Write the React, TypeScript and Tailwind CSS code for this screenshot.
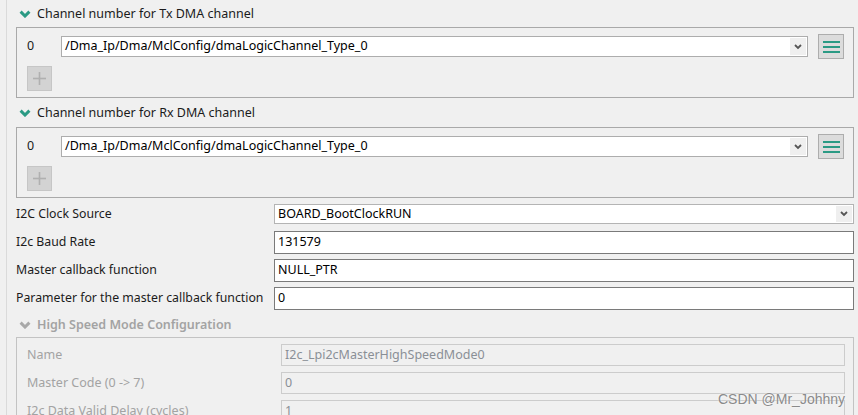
import React from "react";

const font = { fontFamily: '"Noto Sans", "Open Sans", sans-serif' };

function Chevron({ color }: { color: string }) {
  return (
    <svg width="12" height="8" viewBox="0 0 12 8" className="shrink-0">
      <polyline points="1.6,1.6 6,6 10.4,1.6" fill="none" stroke={color} strokeWidth="3" />
    </svg>
  );
}

function SmallArrow() {
  return (
    <svg width="8" height="6" viewBox="0 0 8 6">
      <polyline points="1,1 4,4 7,1" fill="none" stroke="#555" strokeWidth="1.8" />
    </svg>
  );
}

function SectionHeader({ title, disabled, h }: { title: string; disabled?: boolean; h: string }) {
  return (
    <div className={`flex items-center gap-[6px] pl-[3px] pt-[1px] ${h}`}>
      <Chevron color={disabled ? "#a9a9a9" : "#2a9a84"} />
      <span className={disabled ? "text-[12.5px] font-semibold text-[#a3a3a3]" : "text-[12.5px] text-[#1b1b1b]"}>{title}</span>
    </div>
  );
}

function ChannelBox({ value }: { value: string }) {
  return (
    <div className="h-[71px] border border-[#a9a9a9] pl-[10px] pr-[9px] pt-[6px]">
      <div className="flex items-center h-[25px]">
        <span className="w-[34px] text-[12.5px] text-[#1b1b1b]">0</span>
        <div className="flex-1 h-[21px] bg-white border border-[#adadad] flex items-center pl-[3px] pr-[1px]">
          <span className="flex-1 text-[12.5px] text-black leading-none">{value}</span>
          <div className="w-[16px] h-[17px] bg-[#efefef] flex items-center justify-center">
            <SmallArrow />
          </div>
        </div>
        <div className="ml-[10px] w-[26px] h-[25px] bg-[#dcdcdc] border border-[#adadad] flex flex-col items-center justify-center gap-[3px]">
          <div className="w-[17px] h-[2px] bg-[#2a9a84]" />
          <div className="w-[17px] h-[2px] bg-[#2a9a84]" />
          <div className="w-[17px] h-[2px] bg-[#2a9a84]" />
        </div>
      </div>
      <div className="mt-[7px] w-[25px] h-[25px] bg-[#d3d3d3] border border-[#c6c6c6] flex items-center justify-center">
        <svg width="15" height="15" viewBox="0 0 15 15">
          <line x1="7.5" y1="1" x2="7.5" y2="14" stroke="#b0b0b0" strokeWidth="1.6" />
          <line x1="1" y1="7.5" x2="14" y2="7.5" stroke="#b0b0b0" strokeWidth="1.6" />
        </svg>
      </div>
    </div>
  );
}

function FieldRow({ label, value, select }: { label: string; value: string; select?: boolean }) {
  return (
    <div className="flex items-center h-[28px]">
      <span className="w-[258px] shrink-0 text-[12.3px] text-[#1b1b1b] whitespace-nowrap">{label}</span>
      {select ? (
        <div className="flex-1 h-[20px] bg-white border border-[#b4b4b4] flex items-center pl-[3px] pr-[1px]">
          <span className="flex-1 text-[12.5px] text-black leading-none">{value}</span>
          <div className="w-[16px] h-[16px] bg-[#efefef] flex items-center justify-center">
            <SmallArrow />
          </div>
        </div>
      ) : (
        <div className="flex-1 h-[23px] bg-white border border-[#7a7a7a] flex items-center pl-[3px]">
          <span className="text-[12.5px] text-black leading-none">{value}</span>
        </div>
      )}
    </div>
  );
}

function DisabledRow({ label, value }: { label: string; value: string }) {
  return (
    <div className="flex items-center h-[28px]">
      <span className="w-[254px] shrink-0 text-[12.5px] text-[#a3a3a3] whitespace-nowrap">{label}</span>
      <div className="flex-1 h-[22px] border border-[#cccccc] bg-[#f0f0f0] flex items-center pl-[3px]">
        <span className="text-[12.5px] text-[#8a8f96] leading-none">{value}</span>
      </div>
    </div>
  );
}

export default function App() {
  return (
    <div className="relative w-[858px] h-[415px] overflow-hidden bg-[#f0f0f0]" style={font}>
      <div className="ml-[6px] h-full border-l border-[#dadada] pl-[9px] pr-[4px]">
        <SectionHeader title="Channel number for Tx DMA channel" h="h-[27px]" />
        <ChannelBox value="/Dma_Ip/Dma/MclConfig/dmaLogicChannel_Type_0" />
        <SectionHeader title="Channel number for Rx DMA channel" h="h-[29px]" />
        <ChannelBox value="/Dma_Ip/Dma/MclConfig/dmaLogicChannel_Type_0" />
        <div className="h-[2px]" />
        <FieldRow label="I2C Clock Source" value="BOARD_BootClockRUN" select />
        <FieldRow label="I2c Baud Rate" value="131579" />
        <FieldRow label="Master callback function" value="NULL_PTR" />
        <FieldRow label="Parameter for the master callback function" value="0" />
        <SectionHeader title="High Speed Mode Configuration" disabled h="h-[25px]" />
        <div className="border border-[#c3c3c3] pl-[10px] pr-[8px] pt-[3px] h-[120px]">
          <DisabledRow label="Name" value="I2c_Lpi2cMasterHighSpeedMode0" />
          <DisabledRow label="Master Code (0 -> 7)" value="0" />
          <DisabledRow label="I2c Data Valid Delay (cycles)" value="1" />
        </div>
      </div>
      <span
        className="absolute left-[718px] top-[389px] text-[14px] text-[#8a8a8a] [text-shadow:0_0_2px_#ffffff]"
        style={{ fontFamily: '"Liberation Sans", Arial, sans-serif' }}
      >
        CSDN @Mr_Johhny
      </span>
    </div>
  );
}
